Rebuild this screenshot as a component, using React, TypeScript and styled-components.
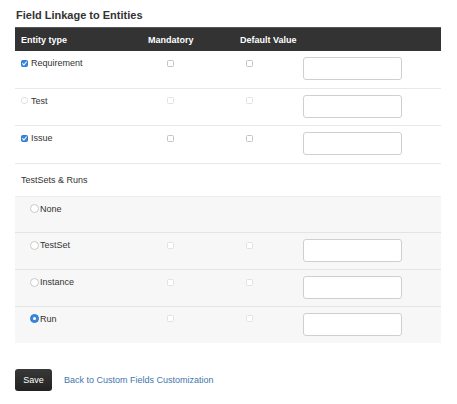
import React from "react";
import styled, { createGlobalStyle, css } from "styled-components";

const Global = createGlobalStyle`
  html, body { margin: 0; padding: 0; background: #fff; }
  body { font-family: "Liberation Sans", Arial, Helvetica, sans-serif; color: #333; }
  * { box-sizing: border-box; }
`;

const Page = styled.div`
  width: 457px;
  height: 404px;
  padding: 8px 16px 0 15px;
`;

const Title = styled.h2`
  margin: 0 0 5px 1px;
  font-size: 11px;
  line-height: 14px;
  font-weight: 700;
  color: #333;
`;

const Table = styled.div`
  width: 426px;
  display: flex;
  flex-direction: column;
`;

const cols = "133px 92px 63px 1fr";

const HeaderRow = styled.div`
  display: grid;
  grid-template-columns: ${cols};
  height: 24px;
  align-items: center;
  background: #333;
  border-top: 1px solid #555;
  color: #fff;
  font-size: 9px;
  font-weight: 700;
`;

const HeaderCell = styled.div<{ $pl?: number }>`
  padding-left: ${(p) => p.$pl ?? 0}px;
`;

const Row = styled.div<{ $gray?: boolean; $last?: boolean; $minH?: number }>`
  display: grid;
  grid-template-columns: ${cols};
  align-items: start;
  min-height: ${(p) => p.$minH ?? 36}px;
  padding: 6px 0 0;
  font-size: 9px;
  line-height: 12px;
  color: #333;
  background: ${(p) => (p.$gray ? "#f7f7f7" : "#fff")};
  border-bottom: ${(p) => (p.$last ? "none" : `1px solid ${p.$gray ? "#e4e4e4" : "#e8e8e8"}`)};
  box-sizing: content-box;
`;

const SectionRow = styled.div`
  height: 33px;
  display: flex;
  align-items: center;
  padding-left: 6px;
  font-size: 9px;
  color: #333;
  border-bottom: 1px solid #ececec;
`;

const Cell = styled.div<{ $pl?: number }>`
  display: flex;
  align-items: center;
  padding-left: ${(p) => p.$pl ?? 0}px;
  min-height: 12px;
`;

const Label = styled.span`
  white-space: nowrap;
`;

const Box = styled.span<{ $checked?: boolean; $faint?: boolean; $round?: boolean }>`
  display: inline-block;
  position: relative;
  width: 7px;
  height: 7px;
  border-radius: ${(p) => (p.$round ? "3px" : "1.5px")};
  border: 1px solid ${(p) => (p.$faint ? "#e2e2e2" : "#c4c4c4")};
  background: #fff;
  flex: none;
  ${(p) =>
    p.$checked &&
    css`
      border-color: #2f7ad3;
      background: #3a86dc;
    `}
`;

const Radio = styled.span<{ $checked?: boolean }>`
  display: inline-block;
  width: 9px;
  height: 9px;
  border-radius: 50%;
  border: 1px solid #c9c9c9;
  background: #fff;
  flex: none;
  position: relative;
  ${(p) =>
    p.$checked &&
    css`
      border-color: #2f7ad3;
      background: #3a86dc;
      &::after {
        content: "";
        position: absolute;
        left: 2px;
        top: 2px;
        width: 3px;
        height: 3px;
        border-radius: 50%;
        background: #fff;
      }
    `}
`;

const Check = () => (
  <svg width="7" height="7" viewBox="0 0 7 7" style={{ position: "absolute", left: -1, top: -1 }}>
    <path d="M1.6 3.7 L2.9 5 L5.4 2" stroke="#fff" strokeWidth="1.1" fill="none" strokeLinecap="round" strokeLinejoin="round" />
  </svg>
);

const CheckItem = styled.div`
  display: flex;
  align-items: center;
  gap: 3px;
`;

const RadioItem = styled.div`
  display: flex;
  align-items: center;
  gap: 1px;
  padding-left: 15px;
`;

const TextBox = styled.div`
  width: 99px;
  height: 23px;
  border: 1px solid #cfcfcf;
  border-radius: 3px;
  background: #fff;
`;

const Footer = styled.div`
  display: flex;
  align-items: center;
  gap: 12px;
  margin-top: 26px;
`;

const SaveButton = styled.button`
  width: 37px;
  height: 22px;
  border: none;
  border-radius: 3px;
  background: linear-gradient(#383838, #222);
  color: #fff;
  font-family: "Liberation Sans", Arial, sans-serif;
  font-size: 9px;
  padding: 0;
`;

const Link = styled.a`
  color: #3f77ab;
  font-size: 9px;
  text-decoration: none;
`;

type EntityRow = { name: string; checked: boolean; faint: boolean; round?: boolean };
const entities: EntityRow[] = [
  { name: "Requirement", checked: true, faint: false },
  { name: "Test", checked: false, faint: true, round: true },
  { name: "Issue", checked: true, faint: false },
];

type RunRow = { name: string; checked: boolean; fields: boolean };
const runs: RunRow[] = [
  { name: "None", checked: false, fields: false },
  { name: "TestSet", checked: false, fields: true },
  { name: "Instance", checked: false, fields: true },
  { name: "Run", checked: true, fields: true },
];

export default function App() {
  return (
    <Page>
      <Global />
      <Title>Field Linkage to Entities</Title>
      <Table>
        <HeaderRow>
          <HeaderCell $pl={6}>Entity type</HeaderCell>
          <HeaderCell>Mandatory</HeaderCell>
          <HeaderCell>Default Value</HeaderCell>
          <HeaderCell />
        </HeaderRow>
        {entities.map((e) => (
          <Row key={e.name} $minH={30.5}>
            <Cell $pl={6}>
              <CheckItem>
                <Box $checked={e.checked} $faint={e.faint} $round={e.round}>
                  {e.checked && <Check />}
                </Box>
                <Label>{e.name}</Label>
              </CheckItem>
            </Cell>
            <Cell $pl={19}>
              <Box $faint={e.faint} />
            </Cell>
            <Cell $pl={6}>
              <Box $faint={e.faint} />
            </Cell>
            <Cell>
              <TextBox />
            </Cell>
          </Row>
        ))}
        <SectionRow>TestSets &amp; Runs</SectionRow>
        {runs.map((r, i) => (
          <Row key={r.name} $gray $minH={29.75} $last={i === runs.length - 1}>
            <Cell>
              <RadioItem>
                <Radio $checked={r.checked} />
                <Label>{r.name}</Label>
              </RadioItem>
            </Cell>
            <Cell $pl={19}>{r.fields && <Box $faint />}</Cell>
            <Cell $pl={6}>{r.fields && <Box $faint />}</Cell>
            <Cell>{r.fields && <TextBox />}</Cell>
          </Row>
        ))}
      </Table>
      <Footer>
        <SaveButton>Save</SaveButton>
        <Link href="#">Back to Custom Fields Customization</Link>
      </Footer>
    </Page>
  );
}
